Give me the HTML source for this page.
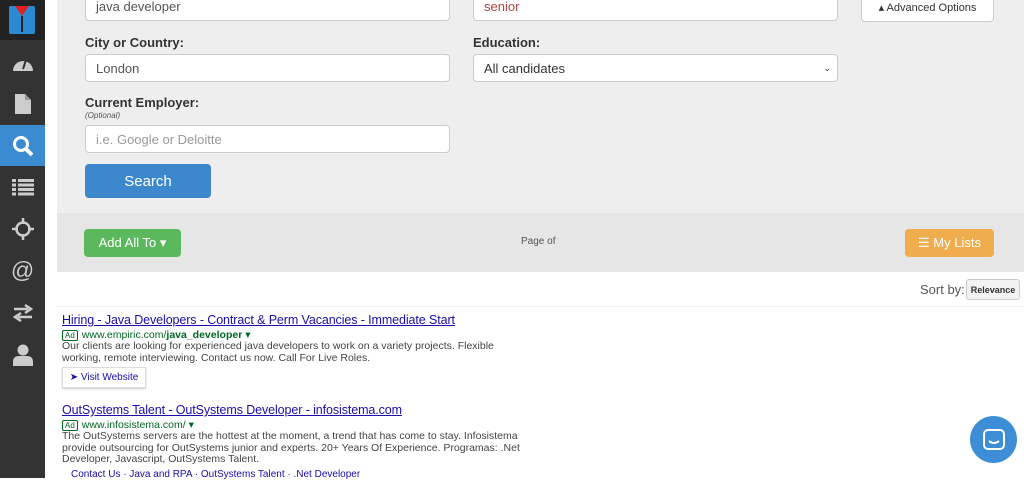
<!DOCTYPE html>
<html><head><style>
*{box-sizing:border-box;margin:0;padding:0}
body{width:1024px;height:478px;overflow:hidden;background:#fff;font-family:"Liberation Sans",Arial,sans-serif;position:relative}
.sb{position:absolute;left:0;top:0;width:45px;height:478px;background:#333}
.logo{position:absolute;left:0;top:0;width:45px;height:40px;background:#222}
.ic{position:absolute;left:0;width:45px;height:41px;display:flex;align-items:center;justify-content:center}
.panel{position:absolute;left:57px;top:0;right:0;height:213px;background:#eee}
.bar{position:absolute;left:57px;top:213px;right:0;height:59px;background:#e6e6e6}
.inp{position:absolute;background:#fff;border:1px solid #ccc;border-radius:4px;font-size:13px;color:#555;padding-left:10px;display:flex;align-items:center}
.lbl{position:absolute;font-size:13px;font-weight:bold;color:#333}
.btn{position:absolute;border-radius:4px;color:#fff;display:flex;align-items:center;justify-content:center}
.t{position:absolute;left:62px;font-size:12.5px;color:#1a0dab;text-decoration:underline;letter-spacing:-0.1px}
.u{position:absolute;left:62px;font-size:10.5px;color:#006621}
.ad{border:1px solid #006621;border-radius:2px;font-size:8px;padding:0 2px;margin-right:4px}
.d{position:absolute;left:62px;font-size:10.5px;color:#444;line-height:11.5px;width:470px}
</style></head><body>
<div class="sb">
<div class="logo"><svg style="position:absolute;left:9px;top:6px" width="26" height="28"><rect width="26" height="28" rx="2" fill="#2a8ad3"/><path d="M6 0 L13 10 L20 0Z" fill="#e02020"/><rect x="12" y="10" width="2" height="16" fill="#222"/></svg></div>
<div class="ic" style="top:42px"><svg width="22" height="18"><path d="M1 17 A10 10 0 1 1 21 17Z" fill="#ccc"/><path d="M11 15 L14 6" stroke="#333" stroke-width="2"/></svg></div>
<div class="ic" style="top:83px"><svg width="16" height="20"><path d="M0 0H10L16 6V20H0Z" fill="#ccc"/><path d="M10 0V6H16" fill="#999"/></svg></div>
<div class="ic" style="top:125px;background:#3a8bd0"><svg width="22" height="22"><circle cx="9" cy="9" r="6.5" stroke="#fff" stroke-width="3" fill="none"/><path d="M14 14L20 20" stroke="#fff" stroke-width="4"/></svg></div>
<div class="ic" style="top:166px"><svg width="22" height="18"><g fill="#ccc"><rect y="1" width="4" height="3"/><rect x="6" y="1" width="16" height="3"/><rect y="5.5" width="4" height="3"/><rect x="6" y="5.5" width="16" height="3"/><rect y="10" width="4" height="3"/><rect x="6" y="10" width="16" height="3"/><rect y="14.5" width="4" height="3"/><rect x="6" y="14.5" width="16" height="3"/></g></svg></div>
<div class="ic" style="top:208px"><svg width="22" height="22"><circle cx="11" cy="11" r="6.5" stroke="#ccc" stroke-width="2.5" fill="none"/><path d="M11 0V6M11 16V22M0 11H6M16 11H22" stroke="#ccc" stroke-width="2.5"/></svg></div>
<div class="ic" style="top:250px;color:#ccc;font-size:23px">@</div>
<div class="ic" style="top:292px"><svg width="22" height="18"><path d="M2 5H16M13 1L19 5L13 9M20 13H6M9 9L3 13L9 17" stroke="#ccc" stroke-width="2.5" fill="none"/></svg></div>
<div class="ic" style="top:334px"><svg width="20" height="22"><circle cx="10" cy="6" r="5.5" fill="#ccc"/><path d="M0 22V18Q0 12 6 12H14Q20 12 20 18V22Z" fill="#ccc"/></svg></div>
</div>
<div class="panel"></div><div class="bar"></div>
<div class="inp" style="left:85px;top:-8px;width:365px;height:29px">java developer</div>
<div class="inp" style="left:473px;top:-8px;width:365px;height:29px;color:#a94442">senior</div>
<div class="inp" style="left:861px;top:-8px;width:133px;height:30px;font-size:11px;color:#333;justify-content:center;padding:0">▴ Advanced Options</div>
<div class="lbl" style="left:85px;top:35px">City or Country:</div>
<div class="lbl" style="left:473px;top:35px">Education:</div>
<div class="inp" style="left:85px;top:54px;width:365px;height:28px">London</div>
<div class="inp" style="left:473px;top:54px;width:365px;height:28px;color:#333">All candidates<span style="position:absolute;right:6px;font-size:9px">⌄</span></div>
<div class="lbl" style="left:85px;top:95px">Current Employer:</div>
<div style="position:absolute;left:85px;top:111px;font-size:8px;font-style:italic;color:#555">(Optional)</div>
<div class="inp" style="left:85px;top:125px;width:365px;height:28px;color:#999">i.e. Google or Deloitte</div>
<div class="btn" style="left:85px;top:164px;width:126px;height:34px;background:#3d88cc;font-size:15px">Search</div>
<div class="btn" style="left:84px;top:229px;width:97px;height:28px;background:#5cb85c;font-size:13px">Add All To ▾</div>
<div style="position:absolute;left:521px;top:236px;font-size:10px;color:#555">Page of</div>
<div class="btn" style="left:905px;top:229px;width:89px;height:28px;background:#f0ad4e;font-size:13px">☰ My Lists</div>
<div style="position:absolute;left:920px;top:282px;font-size:13px;color:#555">Sort by:</div>
<div style="position:absolute;left:966px;top:279px;width:54px;height:21px;background:#f2f2f2;border:1px solid #ccc;border-radius:3px;font-size:9px;font-weight:bold;color:#333;display:flex;align-items:center;justify-content:center">Relevance</div>
<div style="position:absolute;left:57px;top:306px;right:0;height:1px;background:#eee"></div>
<div class="t" style="top:313px">Hiring - Java Developers - Contract &amp; Perm Vacancies - Immediate Start</div>
<div class="u" style="top:329px"><span class="ad">Ad</span>www.empiric.com/<b>java_developer</b> ▾</div>
<div class="d" style="top:341px">Our clients are looking for experienced java developers to work on a variety projects. Flexible working, remote interviewing. Contact us now. Call For Live Roles.</div>
<div style="position:absolute;left:62px;top:367px;width:84px;height:21px;border:1px solid #ddd;box-shadow:0 1px 2px #ccc;font-size:10px;color:#1a0dab;display:flex;align-items:center;justify-content:center">➤ Visit Website</div>
<div class="t" style="top:403px">OutSystems Talent - OutSystems Developer - infosistema.com</div>
<div class="u" style="top:419px"><span class="ad">Ad</span>www.infosistema.com/ ▾</div>
<div class="d" style="top:431px">The OutSystems servers are the hottest at the moment, a trend that has come to stay. Infosistema provide outsourcing for OutSystems junior and experts. 20+ Years Of Experience. Programas: .Net Developer, Javascript, OutSystems Talent.</div>
<div style="position:absolute;left:71px;top:469px;font-size:10px;color:#1a0dab">Contact Us · Java and RPA · OutSystems Talent · .Net Developer</div>
<div style="position:absolute;left:970px;top:416px;width:47px;height:47px;border-radius:50%;background:#3d8ed6;display:flex;align-items:center;justify-content:center"><svg width="22" height="22"><rect x="1" y="1" width="20" height="19" rx="4" stroke="#fff" stroke-width="2" fill="none"/><path d="M6 12Q11 16 16 12" stroke="#fff" stroke-width="2" fill="none"/></svg></div>
</body></html>
